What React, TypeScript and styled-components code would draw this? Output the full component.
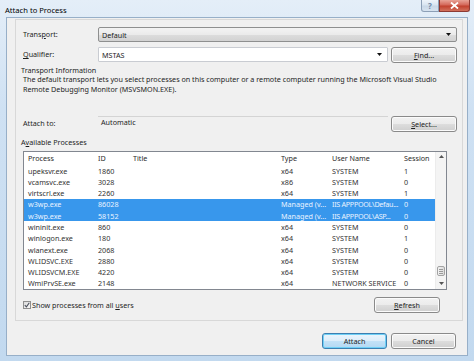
import styled, { createGlobalStyle } from "styled-components";

const GlobalStyle = createGlobalStyle`
  html, body { margin: 0; padding: 0; }
  body {
    width: 474px;
    height: 361px;
    overflow: hidden;
    font-family: "Noto Sans", "Open Sans", sans-serif;
    font-size: 7.2px;
    color: #1e1e1e;
    background: #c5dbf0;
  }
`;

const Window = styled.div`
  width: 474px;
  height: 361px;
  box-sizing: border-box;
  display: flex;
  flex-direction: column;
  padding: 0 6px 5px 6px;
  background: linear-gradient(180deg, #e4eef8 0%, #cfe1f3 30%, #c2d9ef 100%);
`;

const TitleBar = styled.div`
  height: 17px;
  display: flex;
  justify-content: space-between;
  align-items: flex-start;
`;

const Title = styled.span`
  padding: 5px 0 0 0;
  margin-left: -1px;
  font-size: 7.6px;
  color: #000;
`;

const Captions = styled.div`
  display: flex;
  margin-right: -2px;
`;

const CaptionButton = styled.div<{ $close?: boolean }>`
  width: ${({ $close }) => ($close ? "31px" : "18px")};
  height: 12px;
  box-sizing: border-box;
  display: flex;
  align-items: center;
  justify-content: center;
  border: 1px solid ${({ $close }) => ($close ? "#8d3a33" : "#8c9fb6")};
  border-top: none;
  border-radius: ${({ $close }) => ($close ? "0 0 3px 0" : "0 0 0 3px")};
  background: ${({ $close }) =>
    $close
      ? "linear-gradient(180deg, #e8a397 0%, #d4685a 45%, #c2412f 55%, #d1705c 100%)"
      : "linear-gradient(180deg, #eef4fa 0%, #d9e5f1 45%, #c8d7e7 55%, #d8e4f0 100%)"};
  color: #6e87a5;
  font-size: 8px;
  font-weight: bold;
`;

const Client = styled.div`
  flex: 1;
  display: flex;
  flex-direction: column;
  background: #f0f0f0;
  border: 1px solid #97afc8;
`;

const Panel = styled.div`
  margin: 1px 4px 0 8px;
  padding: 0 5px 8px 0;
  border: 1px solid #d8d8d8;
  display: flex;
  flex-direction: column;
`;

const FieldRow = styled.div<{ $top: number; $h: number }>`
  display: grid;
  grid-template-columns: 72px 1fr 66px;
  column-gap: 3px;
  align-items: start;
  padding-left: 7px;
  margin-top: ${({ $top }) => $top}px;
  height: ${({ $h }) => $h}px;
`;

const Label = styled.span`
  line-height: 15px;
`;

const Combo = styled.div<{ $editable?: boolean; $wide?: boolean }>`
  grid-column: ${({ $wide }) => ($wide ? "2 / 4" : "2 / 3")};
  height: 15px;
  box-sizing: border-box;
  display: flex;
  align-items: center;
  justify-content: space-between;
  padding: 0 5px 0 3px;
  border: 1px solid ${({ $editable }) => ($editable ? "#c9ccd2" : "#8e8f8f")};
  border-radius: ${({ $editable }) => ($editable ? "1px" : "2px")};
  background: ${({ $editable }) =>
    $editable ? "#ffffff" : "linear-gradient(180deg, #f3f3f3 0%, #ebebeb 50%, #dddddd 51%, #d2d2d2 100%)"};
`;

const ReadOnlyField = styled.div`
  grid-column: 2 / 3;
  height: 15px;
  box-sizing: border-box;
  border-top: 1px solid #d4d4d4;
  padding-left: 3px;
  line-height: 11px;
`;

const Button = styled.div<{ $width?: number; $default?: boolean }>`
  width: ${({ $width }) => ($width ? `${$width}px` : "auto")};
  height: 16px;
  box-sizing: border-box;
  display: flex;
  align-items: center;
  justify-content: center;
  border: 1px solid ${({ $default }) => ($default ? "#3c7fb1" : "#8a8a8a")};
  border-radius: 3px;
  box-shadow: inset 0 0 0 1px ${({ $default }) => ($default ? "#6fd0f6" : "#fbfbfb")};
  background: ${({ $default }) =>
    $default
      ? "linear-gradient(180deg, #ebf5fc 0%, #dcedfa 50%, #c3e2f7 51%, #b3d8f3 100%)"
      : "linear-gradient(180deg, #f2f2f2 0%, #ebebeb 50%, #dddddd 51%, #cfcfcf 100%)"};
  color: #1e1e1e;
`;

const Section = styled.div<{ $top: number }>`
  margin-top: ${({ $top }) => $top}px;
  padding-left: 5px;
`;

const Heading = styled.div`
  line-height: 10px;
`;

const Paragraph = styled.p`
  margin: 0;
  padding-left: 2px;
  line-height: 9.5px;
`;

const ListBox = styled.div`
  margin: 4px 10px 0 7px;
  height: 139px;
  box-sizing: border-box;
  border: 1px solid #828790;
  background: #fff;
  display: flex;
`;

const ListBody = styled.div`
  flex: 1;
  display: flex;
  flex-direction: column;
`;

const Cols = "70px 35px 148px 51px 72px 1fr";

const HeaderRow = styled.div`
  display: grid;
  grid-template-columns: ${Cols};
  height: 13px;
  align-items: center;
  color: #2a2a2a;
`;

const Row = styled.div<{ $selected?: boolean }>`
  display: grid;
  grid-template-columns: ${Cols};
  height: 11.3px;
  align-items: center;
  background: ${({ $selected }) => ($selected ? "#3897ec" : "transparent")};
  color: ${({ $selected }) => ($selected ? "#eaf3ff" : "#333")};
`;

const Cell = styled.span<{ $tight?: boolean }>`
  padding-left: 4px;
  white-space: nowrap;
  overflow: hidden;
  letter-spacing: ${({ $tight }) => ($tight ? "-0.3px" : "normal")};
`;

const ScrollBar = styled.div`
  width: 11px;
  display: flex;
  flex-direction: column;
  align-items: center;
  justify-content: space-between;
  background: #f4f4f4;
  border-left: 1px solid #ececec;
  padding: 3px 0 4px 0;
  box-sizing: border-box;
`;

const Track = styled.div`
  flex: 1;
  display: flex;
  flex-direction: column;
  justify-content: flex-end;
  padding-bottom: 6px;
`;

const Thumb = styled.div`
  width: 8px;
  height: 10px;
  box-sizing: border-box;
  border: 1px solid #a3a3a3;
  border-radius: 2px;
  background: linear-gradient(90deg, #f3f3f3, #dcdcdc);
  display: flex;
  flex-direction: column;
  justify-content: center;
  gap: 1px;
  padding: 0 1px;
`;

const Grip = styled.div`
  height: 1px;
  background: #9a9a9a;
`;

const CheckRow = styled.div`
  margin: 7px 17px 0 7px;
  display: flex;
  justify-content: space-between;
  align-items: center;
  height: 15px;
`;

const CheckLabel = styled.label`
  display: flex;
  align-items: center;
  gap: 1px;
`;

const CheckBox = styled.span`
  width: 8px;
  height: 8px;
  box-sizing: border-box;
  border: 1px solid #8f8f8f;
  background: linear-gradient(135deg, #dcdcdc, #f6f6f6);
  display: flex;
  align-items: center;
  justify-content: center;
`;

const Footer = styled.div`
  margin: 12px 11px 0 0;
  display: flex;
  justify-content: flex-end;
  gap: 4px;
`;

const Caret = () => (
  <svg width="5" height="3" viewBox="0 0 5 3">
    <path d="M0 0 H5 L2.5 3 Z" fill="#111" />
  </svg>
);

const processes = [
  ["upeksvr.exe", "1860", "x64", "SYSTEM", "1"],
  ["vcamsvc.exe", "3028", "x86", "SYSTEM", "0"],
  ["virtscrl.exe", "2260", "x64", "SYSTEM", "1"],
  ["w3wp.exe", "86028", "Managed (v...", "IIS APPPOOL\\Defau...", "0", "sel"],
  ["w3wp.exe", "58152", "Managed (v...", "IIS APPPOOL\\ASP...", "0", "sel"],
  ["wininit.exe", "860", "x64", "SYSTEM", "0"],
  ["winlogon.exe", "180", "x64", "SYSTEM", "1"],
  ["wlanext.exe", "2068", "x64", "SYSTEM", "0"],
  ["WLIDSVC.EXE", "2880", "x64", "SYSTEM", "0"],
  ["WLIDSVCM.EXE", "4220", "x64", "SYSTEM", "0"],
  ["WmiPrvSE.exe", "2148", "x64", "NETWORK SERVICE", "0"],
];

export default function App() {
  return (
    <>
      <GlobalStyle />
      <Window>
        <TitleBar>
          <Title>Attach to Process</Title>
          <Captions>
            <CaptionButton>?</CaptionButton>
            <CaptionButton $close>
              <svg width="9" height="7" viewBox="0 0 9 7">
                <path d="M1 0.5 L8 6.5 M8 0.5 L1 6.5" stroke="#fff" strokeWidth="1.8" />
              </svg>
            </CaptionButton>
          </Captions>
        </TitleBar>
        <Client>
          <Panel>
            <FieldRow $top={7} $h={15}>
              <Label>
                Trans<u>p</u>ort:
              </Label>
              <Combo $wide>
                <span>Default</span>
                <Caret />
              </Combo>
            </FieldRow>
            <FieldRow $top={5} $h={17}>
              <Label>
                <u>Q</u>ualifier:
              </Label>
              <Combo $editable>
                <span>MSTAS</span>
                <Caret />
              </Combo>
              <Button>
                <span>
                  <u>F</u>ind...
                </span>
              </Button>
            </FieldRow>
            <Section $top={1}>
              <Heading>Transport Information</Heading>
              <Paragraph>
                The default transport lets you select processes on this computer or a remote computer running the
                Microsoft Visual Studio
                <br />
                Remote Debugging Monitor (MSVSMON.EXE).
              </Paragraph>
            </Section>
            <FieldRow $top={22} $h={17}>
              <Label>Attach to:</Label>
              <ReadOnlyField>Automatic</ReadOnlyField>
              <Button>
                <span>
                  <u>S</u>elect...
                </span>
              </Button>
            </FieldRow>
            <Section $top={4}>
              <Heading>
                A<u>v</u>ailable Processes
              </Heading>
            </Section>
            <ListBox>
              <ListBody>
                <HeaderRow>
                  <Cell>Process</Cell>
                  <Cell>ID</Cell>
                  <Cell>Title</Cell>
                  <Cell>Type</Cell>
                  <Cell>User Name</Cell>
                  <Cell>Session</Cell>
                </HeaderRow>
                {processes.map((p, i) => (
                  <Row key={i} $selected={p[5] === "sel"}>
                    <Cell>{p[0]}</Cell>
                    <Cell>{p[1]}</Cell>
                    <Cell />
                    <Cell>{p[2]}</Cell>
                    <Cell $tight={p[3].length > 16}>{p[3]}</Cell>
                    <Cell>{p[4]}</Cell>
                  </Row>
                ))}
              </ListBody>
              <ScrollBar>
                <svg width="5" height="3" viewBox="0 0 5 3">
                  <path d="M0 3 H5 L2.5 0 Z" fill="#555" />
                </svg>
                <Track>
                  <Thumb>
                    <Grip />
                    <Grip />
                    <Grip />
                  </Thumb>
                </Track>
                <svg width="5" height="3" viewBox="0 0 5 3">
                  <path d="M0 0 H5 L2.5 3 Z" fill="#555" />
                </svg>
              </ScrollBar>
            </ListBox>
            <CheckRow>
              <CheckLabel>
                <CheckBox>
                  <svg width="6" height="6" viewBox="0 0 6 6">
                    <path d="M0.8 3.2 L2.4 4.8 L5.3 0.8" stroke="#4a4f5c" strokeWidth="1.1" fill="none" />
                  </svg>
                </CheckBox>
                <span>
                  Show processes from all <u>u</u>sers
                </span>
              </CheckLabel>
              <Button $width={66}>
                <span>
                  <u>R</u>efresh
                </span>
              </Button>
            </CheckRow>
          </Panel>
          <Footer>
            <Button $width={65} $default>
              Attach
            </Button>
            <Button $width={65}>Cancel</Button>
          </Footer>
        </Client>
      </Window>
    </>
  );
}
